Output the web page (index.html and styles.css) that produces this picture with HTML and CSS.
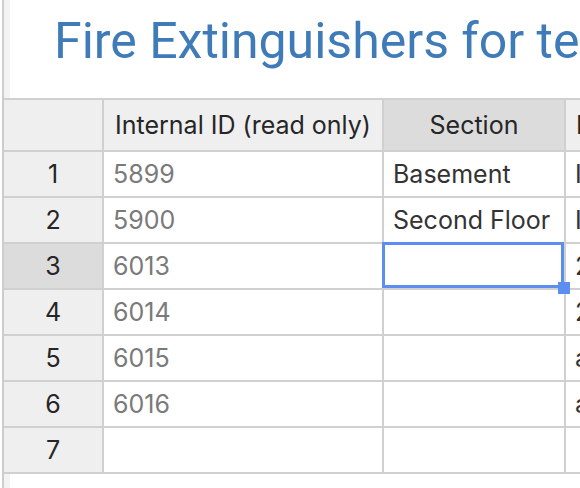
FILE: index.html
```html
<!DOCTYPE html>
<html>
<head>
<meta charset="utf-8">
<link rel="stylesheet" href="styles.css">
</head>
<body>
<div class="frame">
  <div class="title-area">
    <h1 class="title">Fire Extinguishers for testing</h1>
  </div>
  <div class="grid">
    <div class="cell head rownum"></div>
    <div class="cell head">Internal ID (read only)</div>
    <div class="cell head active">Section</div>
    <div class="cell head left">Location</div>

    <div class="cell rownum">1</div>
    <div class="cell ro">5899</div>
    <div class="cell txt">Basement</div>
    <div class="cell txt">In storage room</div>

    <div class="cell rownum">2</div>
    <div class="cell ro">5900</div>
    <div class="cell txt">Second Floor</div>
    <div class="cell txt">In hallway</div>

    <div class="cell rownum active">3</div>
    <div class="cell ro">6013</div>
    <div class="cell txt sel"><span class="selbox"><span class="handle"></span></span></div>
    <div class="cell txt">2nd floor kitchen</div>

    <div class="cell rownum">4</div>
    <div class="cell ro">6014</div>
    <div class="cell txt"></div>
    <div class="cell txt">2nd floor lobby</div>

    <div class="cell rownum">5</div>
    <div class="cell ro">6015</div>
    <div class="cell txt"></div>
    <div class="cell txt">at entrance</div>

    <div class="cell rownum">6</div>
    <div class="cell ro">6016</div>
    <div class="cell txt"></div>
    <div class="cell txt">at back door</div>

    <div class="cell rownum">7</div>
    <div class="cell ro"></div>
    <div class="cell txt"></div>
    <div class="cell txt"></div>
  </div>
  <div class="footer"></div>
</div>
</body>
</html>
```
FILE: styles.css
```css
html, body {
  margin: 0;
  padding: 0;
  background: #ffffff;
  overflow: hidden;
  width: 580px;
  height: 488px;
}
.frame {
  margin-left: 2px;
  border-left: 2px solid #cdcdcd;
  height: 488px;
  width: 700px;
  display: flex;
  flex-direction: column;
}
.title-area {
  height: 98px;
  border-left: 6px solid #f3f3f3;
  box-sizing: border-box;
  padding-left: 44px;
  overflow: hidden;
}
.title {
  margin: 0;
  padding-top: 13px;
  font-family: Roboto, "Liberation Sans", sans-serif;
  font-weight: 400;
  font-size: 50px;
  line-height: 57px;
  color: #3f7bb8;
  white-space: nowrap;
}
.grid {
  display: grid;
  grid-template-columns: 98px 278px 180px 200px;
  grid-template-rows: 50px repeat(7, 44px);
  gap: 2px;
  padding: 2px 0;
  background: #d0d0d0;
  font-family: Inter, "Noto Sans", sans-serif;
  font-size: 25px;
}
.cell {
  background: #ffffff;
  display: flex;
  align-items: center;
  padding-left: 9px;
  white-space: nowrap;
  overflow: hidden;
  color: #333333;
  position: relative;
}
.head {
  background: #efefef;
  justify-content: center;
  padding-left: 0;
  color: #262626;
}
.head.left {
  justify-content: flex-start;
  padding-left: 10px;
}
.head.active {
  background: #dcdcdc;
}
.rownum {
  background: #efefef;
  justify-content: center;
  padding-left: 0;
  color: #262626;
}
.rownum.active {
  background: #dcdcdc;
}
.ro {
  color: #7a7a7a;
}
.sel {
  overflow: visible;
  z-index: 2;
}
.selbox {
  position: absolute;
  left: -2px;
  top: -2px;
  right: 0;
  bottom: 0;
  border: 3px solid #5b8ef0;
}
.handle {
  position: absolute;
  right: -9px;
  bottom: -9px;
  width: 12px;
  height: 12px;
  background: #5b8ef0;
}
.footer {
  flex: 1;
  border-left: 6px solid #f3f3f3;
}
```
